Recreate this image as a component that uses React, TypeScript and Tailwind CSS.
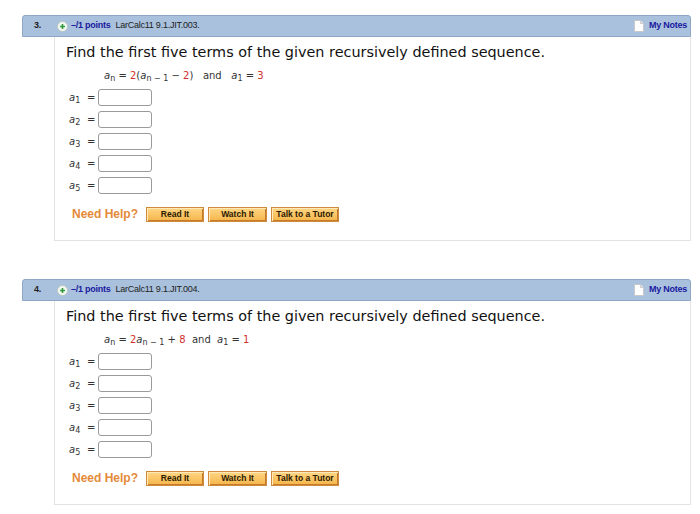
import React from "react";

const sans = { fontFamily: '"DejaVu Sans", Verdana, sans-serif' };
const arial = { fontFamily: '"Liberation Sans", Arial, sans-serif' };

function Sub({ children }: { children: React.ReactNode }) {
  return <sub className="text-[8px] relative top-[2px] align-baseline">{children}</sub>;
}

function A({ sub }: { sub: React.ReactNode }) {
  return (
    <span>
      <span className="italic">a</span>
      <Sub>{sub}</Sub>
    </span>
  );
}

function R({ children }: { children: React.ReactNode }) {
  return <span className="text-[#d0312d]">{children}</span>;
}

function NoteIcon() {
  return (
    <svg width="10" height="12" viewBox="0 0 10 12">
      <path d="M0.5 0.5 H6.5 L9.5 3.5 V11.5 H0.5 Z" fill="#ffffff" stroke="#c8c8c8" />
      <path d="M6.5 0.5 V3.5 H9.5" fill="#eeeeee" stroke="#c8c8c8" />
    </svg>
  );
}

function PlusIcon() {
  return (
    <svg width="11" height="11" viewBox="0 0 11 11">
      <circle cx="5.5" cy="5.5" r="5" fill="#f4f8f4" stroke="#b9c8bd" />
      <path d="M5.5 3 V8 M3 5.5 H8" stroke="#2f9a3a" strokeWidth="1.6" />
    </svg>
  );
}

function HelpButton({ label, w }: { label: string; w: string }) {
  return (
    <div
      className={`${w} h-[15px] flex items-center justify-center border border-[#d08a3c] bg-gradient-to-b from-[#ffd684] to-[#f5b548] shadow-[inset_1px_1px_0_#ffe9b8,inset_-1px_-1px_0_#c77a2c] text-[8.5px] font-bold text-[#2a1a00]`}
      style={arial}
    >
      {label}
    </div>
  );
}

function Row({ n }: { n: number }) {
  return (
    <div className="flex items-center h-[22px]">
      <div className="w-[18px] text-[10px] text-[#333]" style={sans}>
        <A sub={n} />
      </div>
      <div className="w-[11px] text-[10px] text-[#333]" style={sans}>=</div>
      <div className="w-[54px] h-[17px] border border-[#9a9a9a] rounded-[3px] bg-white" />
    </div>
  );
}

function Question({
  num,
  code,
  eq,
}: {
  num: string;
  code: string;
  eq: React.ReactNode;
}) {
  return (
    <div className="ml-[22px] w-[669px]">
      <div
        className="h-[22px] bg-[#a9c1dd] rounded-t-[3px] border border-[#8ea7c4] flex items-center text-[9px] tracking-[-0.25px]"
        style={arial}
      >
        <span className="ml-[11px] w-[23px] font-bold text-[#222]">{num}</span>
        <PlusIcon />
        <span className="ml-[3px] font-bold text-[#1a1aa0]">–/1 points</span>
        <span className="ml-[5px] text-[#222]">{code}</span>
        <span className="ml-auto mr-[3px] flex items-center gap-[5px]">
          <NoteIcon />
          <span className="font-bold text-[#1a1aa0]">My Notes</span>
        </span>
      </div>
      <div className="ml-[32px] border-l border-r border-b border-[#e3e3e3] pb-[17px]">
        <div className="pl-[11px] pt-[5px] text-[14.4px] text-[#111] leading-[20px]" style={sans}>
          Find the first five terms of the given recursively defined sequence.
        </div>
        <div className="pl-[49px] mt-[7px] text-[10px] text-[#333] leading-[14px]" style={sans}>
          {eq}
        </div>
        <div className="pl-[14px] mt-[3px] flex flex-col">
          {[1, 2, 3, 4, 5].map((n) => (
            <Row key={n} n={n} />
          ))}
        </div>
        <div className="pl-[17px] mt-[9px] flex items-center gap-[4px]">
          <span className="text-[12px] font-bold text-[#e48a3a] mr-[4px]" style={arial}>
            Need Help?
          </span>
          <HelpButton label="Read It" w="w-[58px]" />
          <HelpButton label="Watch It" w="w-[59px]" />
          <HelpButton label="Talk to a Tutor" w="w-[68px]" />
        </div>
      </div>
    </div>
  );
}

export default function App() {
  return (
    <div className="w-[700px] h-[514px] bg-white pt-[15px] overflow-hidden">
      <Question
        num="3."
        code="LarCalc11 9.1.JIT.003."
        eq={
          <>
            <A sub="n" /> = <R>2</R>(<A sub="n − 1" /> − <R>2</R>)&nbsp;&nbsp;&nbsp;and&nbsp;&nbsp;&nbsp;<A sub="1" /> = <R>3</R>
          </>
        }
      />
      <div className="h-[38px]" />
      <Question
        num="4."
        code="LarCalc11 9.1.JIT.004."
        eq={
          <>
            <A sub="n" /> = <R>2</R><A sub="n − 1" /> + <R>8</R>&nbsp;&nbsp;and&nbsp;&nbsp;<A sub="1" /> = <R>1</R>
          </>
        }
      />
    </div>
  );
}
